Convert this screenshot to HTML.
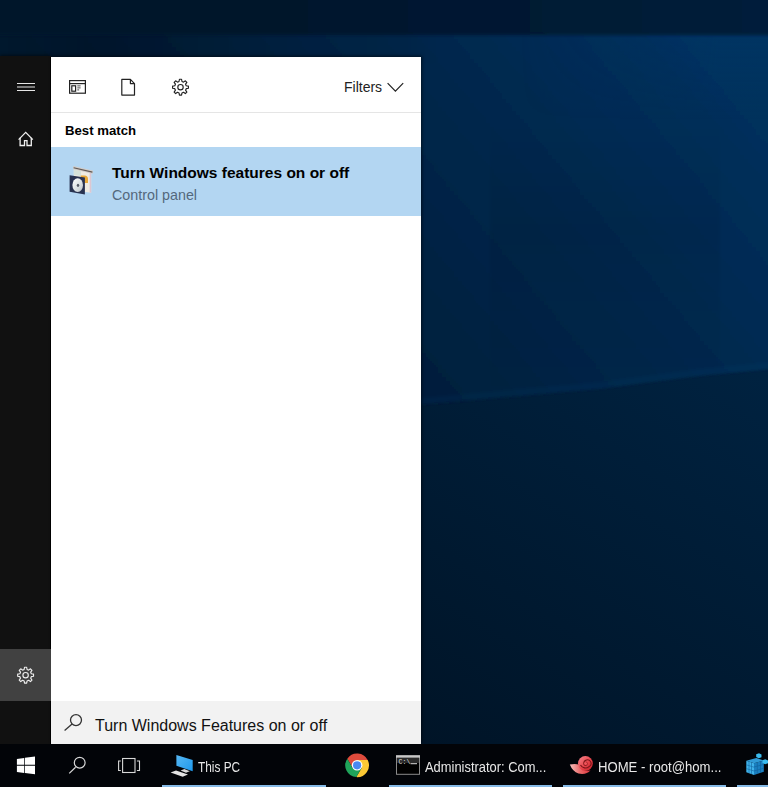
<!DOCTYPE html>
<html><head><meta charset="utf-8">
<style>
*{margin:0;padding:0;box-sizing:border-box}
html,body{width:768px;height:787px;overflow:hidden;background:#02214a;font-family:"Liberation Sans",sans-serif}
.abs{position:absolute}
#bg{left:0;top:0;width:768px;height:744px;overflow:hidden}
#side{left:0;top:56px;width:51px;height:688px;background:#111;box-shadow:0 -1px 3px rgba(0,0,0,.5)}
#sideline{left:50px;top:57px;width:1px;height:687px;background:#000}
#panel{left:51px;top:57px;width:370px;height:687px;background:#fff;box-shadow:1px -1px 3px rgba(0,0,0,.55)}
#sep{left:51px;top:112px;width:370px;height:1px;background:#e5e5e5}
#best{left:65px;top:123px;font-size:13.2px;font-weight:bold;color:#000}
#hl{left:51px;top:147px;width:370px;height:69px;background:#b3d6f2}
#t1{left:112px;top:164px;font-size:15.5px;font-weight:bold;color:#000;white-space:nowrap}
#t2{left:112px;top:187px;font-size:14.3px;color:#53687c;white-space:nowrap}
#filters{left:344px;top:79px;font-size:14px;color:#222}
#setblk{left:0;top:649px;width:51px;height:52px;background:#414141}
#sbox{left:51px;top:701px;width:370px;height:43px;background:#f2f2f2}
#stext{left:95px;top:717px;font-size:16px;color:#111;white-space:nowrap}
#task{left:0;top:744px;width:768px;height:43px;background:#020408}
.tl{font-size:14px;color:#e8e8e8;white-space:nowrap}
.ul{top:785px;height:2px;background:#86bae6}
svg{position:absolute;left:0;top:0}
</style></head><body>
<svg id="bg" class="abs" width="768" height="744" viewBox="0 0 768 744">
  <defs>
    <linearGradient id="gUp" gradientUnits="userSpaceOnUse" x1="0" y1="763" x2="768" y2="136">
      <stop offset="0" stop-color="rgb(0,8,19)"/>
      <stop offset="1" stop-color="rgb(0,48,92)"/>
    </linearGradient>
    <linearGradient id="gLow" gradientUnits="userSpaceOnUse" x1="420" y1="744" x2="768" y2="173">
      <stop offset="0" stop-color="rgb(0,20,39)"/>
      <stop offset="1" stop-color="rgb(0,39,73)"/>
    </linearGradient>
    <linearGradient id="gTop" gradientUnits="userSpaceOnUse" x1="0" y1="0" x2="768" y2="0">
      <stop offset="0" stop-color="rgb(0,21,43)"/>
      <stop offset="0.26" stop-color="rgb(0,20,41)"/>
      <stop offset="1" stop-color="rgb(0,29,58)"/>
    </linearGradient>
    <linearGradient id="gGlow" gradientUnits="userSpaceOnUse" x1="0" y1="36" x2="0" y2="120">
      <stop offset="0" stop-color="rgb(0,60,120)" stop-opacity="0.22"/>
      <stop offset="1" stop-color="rgb(0,60,120)" stop-opacity="0"/>
    </linearGradient>
    <linearGradient id="gGlowX" gradientUnits="userSpaceOnUse" x1="520" y1="0" x2="720" y2="0">
      <stop offset="0" stop-color="#fff" stop-opacity="0"/>
      <stop offset="1" stop-color="#fff" stop-opacity="1"/>
    </linearGradient>
    <mask id="mGlow"><rect x="0" y="0" width="768" height="744" fill="url(#gGlowX)"/></mask>
    <linearGradient id="gDim" gradientUnits="userSpaceOnUse" x1="0" y1="120" x2="0" y2="400">
      <stop offset="0" stop-color="#000" stop-opacity="0"/>
      <stop offset="0.4" stop-color="#000" stop-opacity="0.07"/>
      <stop offset="1" stop-color="#000" stop-opacity="0"/>
    </linearGradient>
    <linearGradient id="gDarkL" gradientUnits="userSpaceOnUse" x1="0" y1="0" x2="440" y2="0">
      <stop offset="0" stop-color="#000" stop-opacity="0.15"/>
      <stop offset="0.23" stop-color="#000" stop-opacity="0.26"/>
      <stop offset="0.57" stop-color="#000" stop-opacity="0.11"/>
      <stop offset="0.92" stop-color="#000" stop-opacity="0.05"/>
      <stop offset="1" stop-color="#000" stop-opacity="0"/>
    </linearGradient>
    <filter id="blur3" x="-5%" y="-50%" width="110%" height="200%"><feGaussianBlur stdDeviation="1.5"/></filter>
    <filter id="blur1"><feGaussianBlur stdDeviation="0.8"/></filter>
  </defs>
  <rect x="0" y="0" width="768" height="744" fill="url(#gLow)"/>
  <polygon points="-10,20 778,20 778,368.5 700,376 600,389 420,405 -10,447" fill="url(#gUp)" filter="url(#blur1)"/>
  <rect x="0" y="36" width="768" height="90" fill="url(#gGlow)" mask="url(#mGlow)"/>
  <rect x="490" y="120" width="230" height="280" fill="url(#gDim)" filter="url(#blur3)"/>
  <rect x="-10" y="34" width="460" height="30" fill="url(#gDarkL)" filter="url(#blur1)"/>
  <polyline points="420,401 600,385 700,372 778,364.5" fill="none" stroke="rgb(20,90,160)" stroke-opacity="0.07" stroke-width="6" filter="url(#blur3)"/>
  <rect x="-10" y="-10" width="788" height="45" fill="url(#gTop)" filter="url(#blur3)"/>
</svg>
<div id="side" class="abs"></div>
<div id="panel" class="abs"></div>
<div id="sideline" class="abs"></div>
<div id="sep" class="abs"></div>
<div id="best" class="abs">Best match</div>
<div id="hl" class="abs"></div>
<div id="t1" class="abs">Turn Windows features on or off</div>
<div id="t2" class="abs">Control panel</div>
<div id="filters" class="abs">Filters</div>
<div id="setblk" class="abs"></div>
<div id="sbox" class="abs"></div>
<div id="stext" class="abs">Turn Windows Features on or off</div>
<div id="task" class="abs"></div>
<div class="abs tl" style="left:197.5px;top:759px;transform:scaleX(0.846);transform-origin:0 0">This PC</div>
<div class="abs tl" style="left:425px;top:758.5px;transform:scaleX(0.922);transform-origin:0 0">Administrator: Com...</div>
<div class="abs tl" style="left:598px;top:758.5px;transform:scaleX(0.9375);transform-origin:0 0">HOME - root@hom...</div>
<div class="abs ul" style="left:162px;width:164px"></div>
<div class="abs ul" style="left:389px;width:163px"></div>
<div class="abs ul" style="left:563px;width:163px"></div>
<div class="abs ul" style="left:737px;width:31px"></div>
<svg width="768" height="787" viewBox="0 0 768 787">
  <!-- hamburger -->
  <g stroke="#e6e6e6" stroke-width="1">
    <line x1="17" y1="83.5" x2="35" y2="83.5"/>
    <line x1="17" y1="87" x2="35" y2="87"/>
    <line x1="17" y1="90.5" x2="35" y2="90.5"/>
  </g>
  <!-- home -->
  <g fill="none" stroke="#f0f0f0" stroke-width="1.3" stroke-linejoin="miter">
    <path d="M18.6,139.6 L25.7,132.4 L32.8,139.6"/>
    <path d="M20.1,137.8 V145.5 H24.5 V140.6 H27 V145.5 H31.3 V137.8"/>
  </g>
  <!-- news icon -->
  <g fill="none" stroke="#222" stroke-width="1.2">
    <rect x="69.6" y="80.6" width="15.8" height="12.6"/>
    <line x1="69.6" y1="83.6" x2="85.4" y2="83.6"/>
    <rect x="71.8" y="85.8" width="3.8" height="5.4"/>
  </g>
  <g stroke="#333" stroke-width="0.9">
    <line x1="77.3" y1="85.9" x2="80.6" y2="85.9"/>
    <line x1="77.3" y1="87.9" x2="80.6" y2="87.9"/>
    <line x1="77.3" y1="89.9" x2="79.2" y2="89.9"/>
  </g>
  <!-- doc icon -->
  <path d="M121.8,79.4 H130.4 L134.5,83.6 V95.1 H121.8 Z M130.4,79.4 V83.6 H134.5" fill="none" stroke="#222" stroke-width="1.2" stroke-linejoin="round"/>
  <!-- gear header -->
  <path d="M179.03,81.49 L179.44,79.27 L181.56,79.27 L181.97,81.49 L183.50,82.12 L185.35,80.84 L186.86,82.35 L185.58,84.20 L186.21,85.73 L188.43,86.14 L188.43,88.26 L186.21,88.67 L185.58,90.20 L186.86,92.05 L185.35,93.56 L183.50,92.28 L181.97,92.91 L181.56,95.13 L179.44,95.13 L179.03,92.91 L177.50,92.28 L175.65,93.56 L174.14,92.05 L175.42,90.20 L174.79,88.67 L172.57,88.26 L172.57,86.14 L174.79,85.73 L175.42,84.20 L174.14,82.35 L175.65,80.84 L177.50,82.12 Z" fill="none" stroke="#222" stroke-width="1.15" stroke-linejoin="round"/><circle cx="180.5" cy="87.2" r="2.7" fill="none" stroke="#222" stroke-width="1.15"/>
  <!-- chevron -->
  <path d="M387.6,83.2 L395.4,91.2 L403.2,83.2" fill="none" stroke="#222" stroke-width="1.2"/>
  <!-- gear side --><path d="M24.13,669.49 L24.54,667.27 L26.66,667.27 L27.07,669.49 L28.60,670.12 L30.45,668.84 L31.96,670.35 L30.68,672.20 L31.31,673.73 L33.53,674.14 L33.53,676.26 L31.31,676.67 L30.68,678.20 L31.96,680.05 L30.45,681.56 L28.60,680.28 L27.07,680.91 L26.66,683.13 L24.54,683.13 L24.13,680.91 L22.60,680.28 L20.75,681.56 L19.24,680.05 L20.52,678.20 L19.89,676.67 L17.67,676.26 L17.67,674.14 L19.89,673.73 L20.52,672.20 L19.24,670.35 L20.75,668.84 L22.60,670.12 Z" fill="none" stroke="#eee" stroke-width="1.15" stroke-linejoin="round"/><circle cx="25.6" cy="675.2" r="2.7" fill="none" stroke="#eee" stroke-width="1.15"/>
  <!-- search icon in box -->
  <g fill="none" stroke="#333" stroke-width="1.3">
    <circle cx="76" cy="720.1" r="5.5"/>
    <line x1="72.1" y1="724" x2="64.6" y2="730.4"/>
  </g>
  <!-- windows logo -->
  <g fill="#fff">
    <polygon points="16.9,758.9 24.2,757.9 24.2,764.7 16.9,764.7"/>
    <polygon points="24.9,757.8 35,756.5 35,764.7 24.9,764.7"/>
    <polygon points="16.9,765.8 24.2,765.8 24.2,772.9 16.9,772.1"/>
    <polygon points="24.9,765.8 35,765.8 35,774.2 24.9,773"/>
  </g>
  <!-- taskbar search -->
  <g fill="none" stroke="#d8d8d8" stroke-width="1.2">
    <circle cx="79.7" cy="762.7" r="5.4"/>
    <line x1="75.6" y1="767.2" x2="69.2" y2="773.4"/>
  </g>
  <!-- task view -->
  <g fill="none" stroke="#d8d8d8" stroke-width="1.1">
    <rect x="122.6" y="758.5" width="12.4" height="14"/>
    <path d="M120.8,761 H118.6 V770.5 H120.8"/>
    <path d="M136.9,761 H139.5 V770.5 H136.9"/>
  </g>
  <!-- This PC icon -->
  <defs><linearGradient id="pcG" x1="0" y1="0" x2="1" y2="1"><stop offset="0" stop-color="#56b8f4"/><stop offset="1" stop-color="#1e98ec"/></linearGradient></defs>
  <polygon points="176.4,755 192.7,760 192.7,771.2 176.4,765.8" fill="url(#pcG)"/>
  <polygon points="170.6,772.5 176,770.4 188,774.6 182.7,776.7" fill="#e4e4e4"/>
  <polygon points="180.6,770.4 184.3,769 189.8,771.2 186,772.7" fill="#d8d8d8"/>
  <!-- chrome -->
  <g transform="translate(357.1,765.3)">
    <path d="M-4.5,2.6 L-9.8,-6.6 A11.8,11.8 0 0 1 10.6,-5.2 L0,-5.2 Z" fill="#de4b3c"/>
    <path d="M0,-5.2 L10.6,-5.2 A11.8,11.8 0 0 1 -0.8,11.8 L4.5,2.6 Z" fill="#fcc934"/>
    <path d="M4.5,2.6 L-0.8,11.8 A11.8,11.8 0 0 1 -9.8,-6.6 L-4.5,2.6 Z" fill="#1fa45a"/>
    <circle r="5.3" fill="#fff"/>
    <circle r="4.1" fill="#4a89f3"/>
  </g>
  <!-- cmd -->
  <rect x="396.5" y="755.8" width="23" height="18.5" fill="#000" stroke="#8a8a8a" stroke-width="1"/>
  <rect x="396" y="755.3" width="24" height="2.4" fill="#c8c8c8"/>
  <rect x="397" y="758" width="22" height="5" fill="#2a2a2a"/>
  <text x="398.6" y="764.3" font-family="Liberation Mono" font-size="6.5" fill="#ddd">C:\</text>
  <rect x="410.5" y="763.2" width="6.5" height="1" fill="#ddd"/>
  <!-- shell -->
  <defs>
    <linearGradient id="shG" x1="0" y1="0" x2="1" y2="1"><stop offset="0" stop-color="#f58a90"/><stop offset="0.55" stop-color="#e8434a"/><stop offset="1" stop-color="#c41f28"/></linearGradient>
    <linearGradient id="tailG" x1="0" y1="0" x2="1" y2="0"><stop offset="0" stop-color="#f6c0bd"/><stop offset="0.5" stop-color="#ea6a6a"/><stop offset="1" stop-color="#d8323a"/></linearGradient>
  </defs>
  <path d="M569.8,764.6 Q575,763.2 579.5,764.8 Q583,772.5 590.5,770.2 Q586.5,775.2 578.5,773.6 Q572.5,771.5 569.8,764.6 Z" fill="url(#tailG)"/>
  <circle cx="585.4" cy="763.4" r="7.4" fill="url(#shG)"/>
  <path d="M585.6,763.6 m0,-1.6 a1.6,1.6 0 1 1 -1.7,2 a3.6,3.6 0 1 1 5.2,2.6 a5.6,5.6 0 0 1 -8.6,-1.6" fill="none" stroke="#7a1418" stroke-width="1.1"/>
  <circle cx="585.6" cy="763.6" r="1.5" fill="#f0545a"/>
  <!-- cubes -->
  <g>
    <polygon points="746.3,760.8 754,763.2 754,775 746.3,772.2" fill="#3fb2ea"/>
    <polygon points="754,763.2 763.8,760.6 763.8,771.8 754,775" fill="#1a7fc0"/>
    <polygon points="746.3,760.8 756.3,757.9 763.8,760.6 754,763.2" fill="#2f9ad6"/>
    <g stroke="#0f5f99" stroke-width="0.7" opacity="0.8">
      <line x1="749" y1="761.7" x2="749" y2="773.2"/><line x1="751.5" y1="762.5" x2="751.5" y2="774.1"/>
      <line x1="746.3" y1="764.8" x2="754" y2="767.2"/><line x1="746.3" y1="768.6" x2="754" y2="771"/>
      <line x1="757.3" y1="762.3" x2="757.3" y2="773.9"/><line x1="760.5" y1="761.5" x2="760.5" y2="773"/>
      <line x1="754" y1="767" x2="763.8" y2="764.4"/><line x1="754" y1="771" x2="763.8" y2="768.2"/>
    </g>
    <polygon points="756.2,754.2 759,753.2 761.5,754.4 761.5,757.2 758.8,758.2 756.2,757" fill="#3bbbee"/>
    <polygon points="762.5,760.2 765.3,759.2 768,760.4 768,763.2 765.1,764.2 762.5,763" fill="#3bbbee"/>
  </g>
  <!-- control panel icon -->
  <g>
    <defs>
      <linearGradient id="cdG" x1="0" y1="0" x2="1" y2="1"><stop offset="0" stop-color="#ffffff"/><stop offset="0.6" stop-color="#d9dfe2"/><stop offset="1" stop-color="#b8c0c4"/></linearGradient>
    </defs>
    <polygon points="73.8,169 91.2,173 91.2,192.8 73.8,190.5" fill="#efebe2"/>
    <polygon points="89.6,172.6 91.2,173 91.2,192.8 89.6,192.6" fill="#dcc6d2"/>
    <polygon points="73.8,169.5 81,171.2 81,176 73.8,175" fill="#d6e2da"/>
    <path d="M80.8,175.4 H84.5 A3.6,3.6 0 0 1 88,179 V183 H80.8 Z" fill="#e8a838"/>
    <polygon points="73.2,165.9 92.8,170.4 92.8,173.8 73.2,169.3" fill="#d2ccc8"/>
    <line x1="73.6" y1="167.7" x2="92.4" y2="172.1" stroke="#5f5854" stroke-width="1.1"/>
    <polygon points="69.6,175.3 84.9,177.6 84.9,194.6 69.6,191.8" fill="#283250"/>
    <ellipse cx="77.7" cy="185.1" rx="5.3" ry="6.9" fill="url(#cdG)"/>
    <ellipse cx="78" cy="185.3" rx="1.2" ry="1.6" fill="#555a66"/>
  </g>
</svg>
</body></html>
